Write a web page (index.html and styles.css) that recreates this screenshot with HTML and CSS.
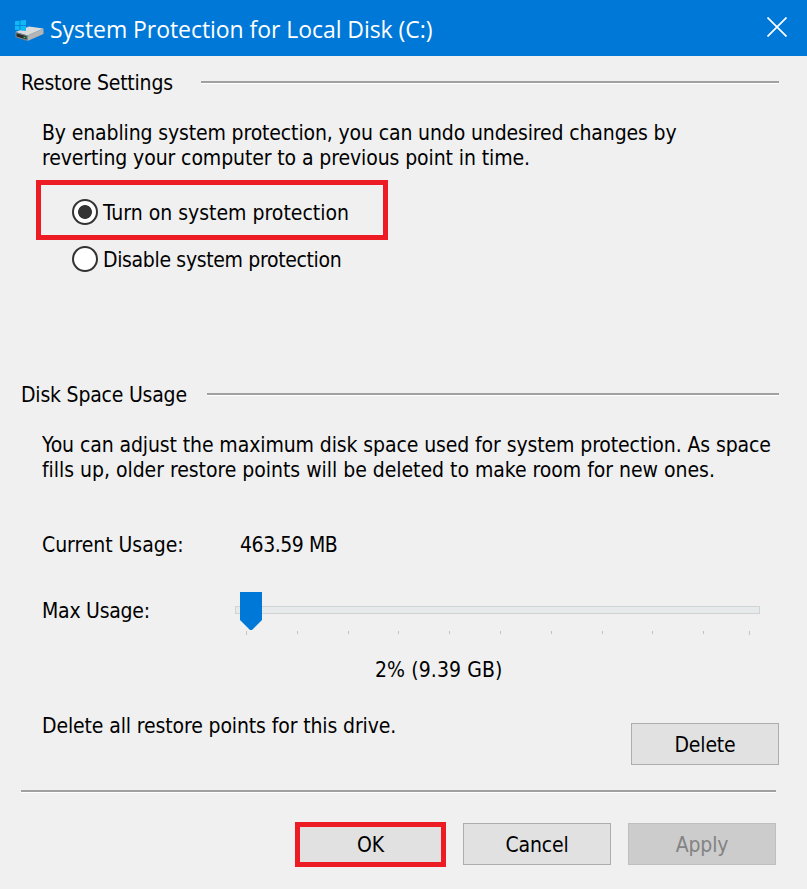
FILE: index.html
```html
<!DOCTYPE html>
<html lang="en">
<head>
<meta charset="utf-8">
<title>System Protection for Local Disk (C:)</title>
<link rel="stylesheet" href="styles.css">
</head>
<body>
<main class="dialog">
  <header class="titlebar">
    <svg class="drive-icon" width="30" height="24" viewBox="0 0 30 24">
      <path fill="#dadada" d="M.5 12L14 6.500 28.500 8.500 12.500 15.500z"/>
      <path fill="#b4b4b4" d="M12.500 15.500L28.500 8.500V14L12.500 21z"/>
      <path fill="#858585" d="M.5 12L12.500 15.500V21L.5 17.200z"/>
      <path fill="#2a2a2a" d="M1.500 13.300L11.500 16.300V19.600L1.500 16.600z"/>
      <path fill="#35c24a" d="M8.500 16.800h2v1.500h-2z"/>
      <path fill="#10b9f5" d="M0 1.200L4.500.7V5H0zM5.300.6L11 0V5H5.300zM0 5.800H4.500V10.300L0 9.800zM5.300 5.800H11V11L5.300 10.400z"/>
    </svg>
    <h1 class="title">System Protection for Local Disk (C:)</h1>
    <svg class="close" width="20" height="20" viewBox="0 0 20 20"><path d="M.5.500L19.500 19.500M19.500.500L.5 19.500" stroke="#fff" stroke-width="1.700"/></svg>
  </header>

  <section class="restore">
    <h2 class="heading"><span>Restore Settings</span><i class="rule"></i></h2>
    <p class="para"><span class="snug">By enabling system protection, you can undo undesired changes by</span><br><span>reverting your computer to a previous point in time.</span></p>
    <div class="option marked"><i class="radio on"></i><span>Turn on system protection</span></div>
    <div class="option"><i class="radio"></i><span>Disable system protection</span></div>
  </section>

  <section class="usage">
    <h2 class="heading"><span>Disk Space Usage</span><i class="rule"></i></h2>
    <p class="para"><span>You can adjust the maximum disk space used for system protection. As space</span><br><span class="loose">fills up, older restore points will be deleted to make room for new ones.</span></p>
    <div class="row current"><span class="label">Current Usage:</span><span class="value">463.59 MB</span></div>
    <div class="row max"><span class="label">Max Usage:</span>
      <svg class="slider" width="526" height="44" viewBox="0 0 526 44">
        <rect x=".5" y="14.500" width="524" height="7" fill="#e7eaea" stroke="#d0d3d3"/>
        <path fill="#c4c4c4" d="M11 39h1v4h-1zM62 39h1v3h-1zM113 39h1v3h-1zM163 39h1v3h-1zM214 39h1v3h-1zM265 39h1v3h-1zM316 39h1v3h-1zM367 39h1v3h-1zM417 39h1v3h-1zM468 39h1v3h-1zM514 39h1v4h-1z"/>
        <path fill="#0078d7" d="M5 0H27V28L17 38H15L5 28z"/>
      </svg>
    </div>
    <div class="amount">2% (9.39 GB)</div>
    <div class="delete-row"><span>Delete all restore points for this drive.</span><button class="btn">Delete</button></div>
  </section>

  <footer class="footer">
    <button class="btn ok">OK</button>
    <button class="btn">Cancel</button>
    <button class="btn" disabled>Apply</button>
  </footer>
</main>
</body>
</html>
```
FILE: styles.css
```css
* { box-sizing: border-box; }
body { margin: 0; background: #f0f0f0; color: #000; font: 21px/25px "DejaVu Sans Condensed", "DejaVu Sans", sans-serif; letter-spacing: -0.1px; }
h1, h2, p { margin: 0; font-weight: 400; font-size: inherit; }
span { white-space: nowrap; }
.dialog { width: 807px; height: 889px; display: flex; flex-direction: column; background: #f0f0f0; overflow: hidden; }
.titlebar { height: 56px; flex: none; display: flex; align-items: center; padding: 0 20px 0 15px; background: #0078d7; color: #fff; }
.drive-icon { margin-top: 8px; }
.title { font: 23px/30px "Open Sans", sans-serif; letter-spacing: -0.06px; margin: 1px 0 0 5px; flex: 1; }
.close { margin-top: -2px; }
.restore { height: 312px; flex: none; padding: 14px 28px 0 21px; }
.usage { height: 422px; flex: none; padding: 14px 28px 0 21px; }
.heading { display: flex; height: 25px; line-height: 27px; letter-spacing: -0.2px; }
.rule { flex: 1; height: 3px; margin-top: 11px; background: #a0a0a0; border-bottom: 1px solid #fff; }
.heading > span { width: 180px; }
.usage .heading > span { width: 186px; }
.para { margin: 26px 0 0 21px; }
.snug { letter-spacing: -0.13px; }
.loose { letter-spacing: -0.03px; }
.option { display: flex; align-items: center; gap: 5px; height: 52px; padding-left: 51px; letter-spacing: -0.34px; }
.option span { margin-top: 2px; }
.marked { width: 352px; height: 60px; margin: 9px 0 -7px 15px; padding: 4px 0 0 31px; border: 5px solid #ed1c24; letter-spacing: 0; }
.radio { width: 26px; height: 26px; flex: none; border: 2px solid #333; border-radius: 50%; background: #fff; }
.on { background: radial-gradient(circle, #333 6.500px, #fff 7.300px); }
.row { display: flex; padding-left: 21px; }
.label { width: 198px; }
.current { margin-top: 50px; }
.current .label { letter-spacing: -0.04px; }
.value { letter-spacing: -0.45px; }
.max { margin-top: 34px; height: 44px; }
.max .label { margin-top: 7px; width: 193px; letter-spacing: -0.25px; }
.amount { margin: 22px 0 0 354px; letter-spacing: 0.1px; }
.delete-row { display: flex; justify-content: space-between; margin: 31px 0 0 21px; letter-spacing: -0.12px; }
.btn { width: 148px; height: 42px; margin: 0; padding: 2px 0 0; font: inherit; letter-spacing: -0.15px; color: #000; background: #e1e1e1; border: 1px solid #adadad; }
.btn:disabled { color: #838383; background: #ccc; border-color: #bfbfbf; }
.delete-row .btn { margin-top: 9px; }
.footer { flex: 1; display: flex; gap: 17px; justify-content: flex-end; margin: 0 31px 0 21px; border-top: 2px solid #a0a0a0; box-shadow: inset 0 1px #fff; padding-top: 31px; }
.ok { width: 151px; height: 45px; margin-top: -1px; border: 5px solid #ed1c24; }
```
